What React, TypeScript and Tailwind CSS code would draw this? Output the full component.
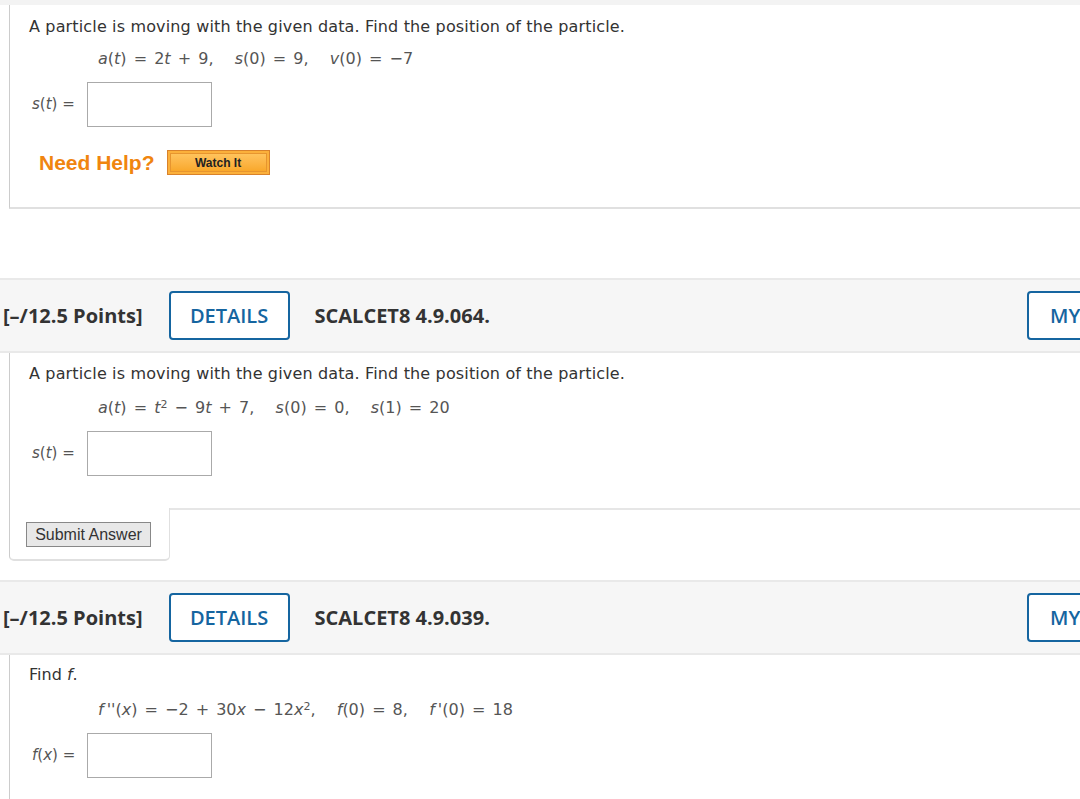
import React from 'react';

const textFont = { fontFamily: '"DejaVu Sans", Verdana, sans-serif' };

const Header: React.FC<{ code: string }> = ({ code }) => (
  <div
    className="flex items-center h-[75px] bg-[#f6f6f6] border-t-2 border-b-2 border-[#e9e9e9] overflow-hidden text-[#333]"
    style={{ fontFamily: '"Open Sans", sans-serif' }}
  >
    <span className="pl-[3px] text-[20px] font-bold whitespace-nowrap">[–/12.5 Points]</span>
    <button className="ml-[26px] h-[49px] w-[121px] shrink-0 rounded-[4px] border-2 border-[#1565a0] bg-white text-[20px] font-semibold text-[#1565a0]">
      DETAILS
    </button>
    <span className="ml-[25px] text-[20px] font-bold whitespace-nowrap">{code}</span>
    <button className="ml-auto mr-[-68px] h-[49px] w-[121px] shrink-0 rounded-[4px] border-2 border-[#1565a0] bg-white text-left pl-[21px] text-[20px] font-semibold text-[#1565a0] whitespace-nowrap">
      MY NOTES
    </button>
  </div>
);

const AnswerRow: React.FC<{ label: React.ReactNode; mt: string }> = ({ label, mt }) => (
  <div className={`flex items-center ${mt}`}>
    <span className="w-[58px] pl-[3px] text-[15px] text-[#555]">{label}</span>
    <div className="h-[45px] w-[125px] border border-[#aaa] bg-white" />
  </div>
);

const mathCls = 'pl-[69px] text-[16px] leading-[20px] text-[#555] whitespace-pre [word-spacing:2px]';

const App: React.FC = () => {
  return (
    <div className="w-[1080px] h-[799px] overflow-hidden bg-white" style={textFont}>
      <div className="h-[5px] bg-[#f3f3f3]" />

      {/* Question 1 */}
      <div className="ml-[9px] h-[204px] border-l border-b-2 border-l-[#ccc] border-b-[#e0e0e0] pl-[19px] pt-[12px] text-[#333]">
        <p className="text-[16px] leading-[20px] tracking-[0.15px]">
          A particle is moving with the given data. Find the position of the particle.
        </p>
        <p className={`mt-[12px] ${mathCls}`}>
          <i>a</i>(<i>t</i>) = 2<i>t</i> + 9,{'   '}<i>s</i>(0) = 9,{'   '}<i>v</i>(0) = −7
        </p>
        <AnswerRow label={<><i>s</i>(<i>t</i>) =</>} mt="mt-[13px]" />
        <div className="mt-[20px] flex items-center pl-[10px]">
          <span
            className="text-[21px] font-bold text-[#f0850f]"
            style={{ fontFamily: '"Liberation Sans", Arial, sans-serif' }}
          >
            Need Help?
          </span>
          <button
            className="ml-[12px] h-[25px] w-[103px] border border-[#d9822b] bg-[#fbb03b] p-[2px]"
            style={{ fontFamily: '"Liberation Sans", Arial, sans-serif' }}
          >
            <span className="flex h-full w-full items-center justify-center border border-[#e7952f] bg-gradient-to-b from-[#ffc35c] to-[#f9a82a] text-[12px] font-bold text-[#222]">
              Watch It
            </span>
          </button>
        </div>
      </div>

      <div className="h-[69px]" />

      <Header code="SCALCET8 4.9.064." />

      {/* Question 2 */}
      <div className="ml-[9px] text-[#333]">
        <div className="h-[155px] border-l border-[#ccc] pl-[19px] pt-[11px]">
          <p className="text-[16px] leading-[20px] tracking-[0.15px]">
            A particle is moving with the given data. Find the position of the particle.
          </p>
          <p className={`mt-[14px] ${mathCls}`}>
            <i>a</i>(<i>t</i>) = <i>t</i><sup className="text-[11px]">2</sup> − 9<i>t</i> + 7,{'   '}<i>s</i>(0) = 0,{'   '}<i>s</i>(1) = 20
          </p>
          <AnswerRow label={<><i>s</i>(<i>t</i>) =</>} mt="mt-[13px]" />
        </div>
        <div className="flex">
          <div className="h-[53px] w-[161px] rounded-b-[5px] border-l border-r border-b-2 border-l-[#ccc] border-r-[#e0e0e0] border-b-[#e0e0e0] pl-[16px] pt-[14px]">
            <button
              className="h-[25px] w-[125px] border border-[#888] bg-[#e8e8e8] text-[16px] leading-none text-[#333]"
              style={{ fontFamily: '"Liberation Sans", Arial, sans-serif' }}
            >
              Submit Answer
            </button>
          </div>
          <div className="flex-1 border-t-2 border-[#e6e6e6]" />
        </div>
      </div>

      <div className="h-[19px]" />

      <Header code="SCALCET8 4.9.039." />

      {/* Question 3 */}
      <div className="ml-[9px] h-[200px] border-l border-[#ccc] pl-[19px] pt-[10px] text-[#333]">
        <p className="text-[16px] leading-[20px]">
          Find <i>f</i>.
        </p>
        <p className={`mt-[15px] ${mathCls}`}>
          <i>f</i><span className="ml-[3px]">''</span>(<i>x</i>) = −2 + 30<i>x</i> − 12<i>x</i><sup className="text-[11px]">2</sup>,{'   '}<i>f</i>(0) = 8,{'   '}<i>f</i><span className="ml-[3px]">'</span>(0) = 18
        </p>
        <AnswerRow label={<><i>f</i>(<i>x</i>) =</>} mt="mt-[13px]" />
      </div>
    </div>
  );
};

export default App;
